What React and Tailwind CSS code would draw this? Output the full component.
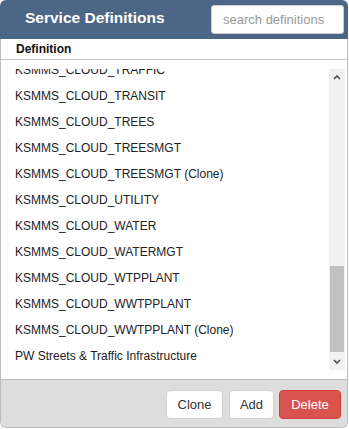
import React from "react";

const rows = [
  "KSMMS_CLOUD_TRAFFIC",
  "KSMMS_CLOUD_TRANSIT",
  "KSMMS_CLOUD_TREES",
  "KSMMS_CLOUD_TREESMGT",
  "KSMMS_CLOUD_TREESMGT (Clone)",
  "KSMMS_CLOUD_UTILITY",
  "KSMMS_CLOUD_WATER",
  "KSMMS_CLOUD_WATERMGT",
  "KSMMS_CLOUD_WTPPLANT",
  "KSMMS_CLOUD_WWTPPLANT",
  "KSMMS_CLOUD_WWTPPLANT (Clone)",
  "PW Streets & Traffic Infrastructure",
];

export default function App() {
  return (
    <div
      className="w-[348px] h-[428px] flex flex-col bg-white"
      style={{ fontFamily: '"Liberation Sans", Arial, sans-serif' }}
    >
      <div className="h-[39px] shrink-0 bg-[#4b6785] rounded-t-[6px] flex items-center justify-between pl-[25px] pr-[4px]">
        <div className="text-white font-bold text-[15.5px] leading-none -mt-[4px]">
          Service Definitions
        </div>
        <input
          className="w-[133px] h-[29px] rounded-[3px] bg-white border border-[#cfcfcf] pl-[11px] text-[13px] text-[#555] placeholder:text-[#999] outline-none -mt-[1px]"
          placeholder="search definitions"
        />
      </div>
      <div className="flex-1 flex flex-col border-x border-b border-[#bdbdbd] rounded-b-[6px] overflow-hidden">
        <div className="h-[21px] shrink-0 border-b border-[#c4c4c4] pl-[15px] text-[12px] font-bold leading-[20px] text-[#111]">
          Definition
        </div>
        <div className="flex-1 flex pt-[9px] pb-[9px] pr-[2px]">
          <div className="flex-1 h-[301px] overflow-hidden">
            <div className="-mt-[12px]">
              {rows.map((r) => (
                <div
                  key={r}
                  className="h-[26px] leading-[26px] pl-[14px] text-[12px] text-[#222] whitespace-nowrap"
                >
                  {r}
                </div>
              ))}
            </div>
          </div>
          <div className="w-[16px] h-[301px] bg-[#f1f1f1] flex flex-col">
            <div className="h-[16px] flex items-center justify-center">
              <svg width="8" height="6" viewBox="0 0 8 6">
                <polyline points="1,5 4,2 7,5" fill="none" stroke="#505050" strokeWidth="1.6" />
              </svg>
            </div>
            <div className="flex-1 flex flex-col justify-end px-[1px] pb-[2px]">
              <div className="h-[86px] bg-[#c1c1c1]" />
            </div>
            <div className="h-[16px] flex items-center justify-center">
              <svg width="8" height="6" viewBox="0 0 8 6">
                <polyline points="1,1 4,4 7,1" fill="none" stroke="#505050" strokeWidth="1.6" />
              </svg>
            </div>
          </div>
        </div>
        <div className="h-[48px] shrink-0 bg-[#dddddd] border-t border-[#bdbdbd] flex justify-end items-start pt-[10px] pr-[6px] gap-[5px]">
          <button className="w-[57px] h-[29px] bg-white border border-[#d0d0d0] rounded-[4px] text-[13px] text-[#333]">
            Clone
          </button>
          <button className="w-[45px] h-[29px] bg-white border border-[#d0d0d0] rounded-[4px] text-[13px] text-[#333] ml-[1px]">
            Add
          </button>
          <button className="w-[62px] h-[29px] bg-[#d9534f] border border-[#d43f3a] rounded-[4px] text-[13px] text-white">
            Delete
          </button>
        </div>
      </div>
    </div>
  );
}
